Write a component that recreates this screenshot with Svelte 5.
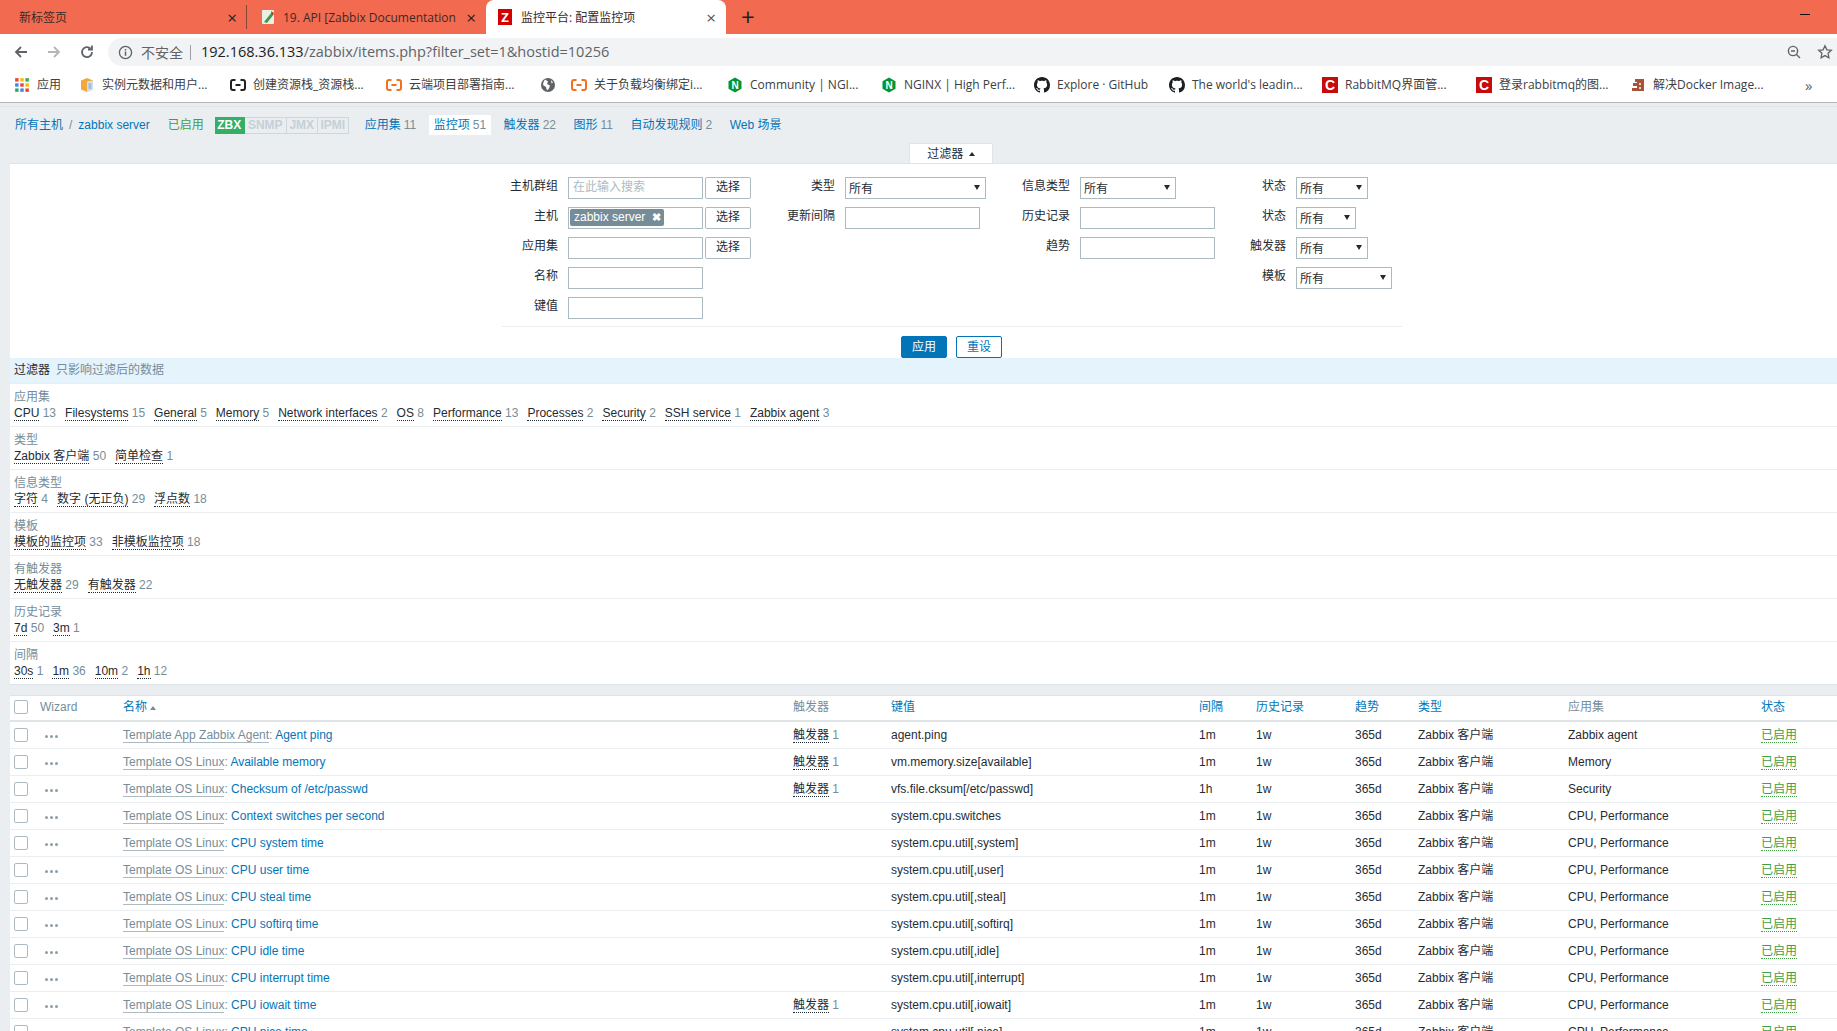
<script>
	const bookmarks = [
		{ icon: 'apps', text: '应用', w: 65 },
		{ icon: 'box', text: '实例元数据和用户...', w: 151 },
		{ icon: 'cloudk', text: '创建资源栈_资源栈...', w: 156 },
		{ icon: 'cloud', text: '云端项目部署指南...', w: 154 },
		{ icon: 'globe', text: '', w: 31 },
		{ icon: 'cloud', text: '关于负载均衡绑定i...', w: 156 },
		{ icon: 'nginx', text: 'Community | NGI...', w: 154 },
		{ icon: 'nginx', text: 'NGINX | High Perf...', w: 153 },
		{ icon: 'gh', text: 'Explore · GitHub', w: 135 },
		{ icon: 'gh', text: "The world's leadin...", w: 153 },
		{ icon: 'csdn', text: 'RabbitMQ界面管...', w: 154 },
		{ icon: 'csdn', text: '登录rabbitmq的图...', w: 154 },
		{ icon: 'brick', text: '解决Docker Image...', w: 172 }
	];

	const navLinks = [
		['应用集', 11, false],
		['监控项', 51, true],
		['触发器', 22, false],
		['图形', 11, false],
		['自动发现规则', 2, false],
		['Web 场景', '', false]
	];

	const subfilters = [
		{ title: '应用集', items: [['CPU', 13], ['Filesystems', 15], ['General', 5], ['Memory', 5], ['Network interfaces', 2], ['OS', 8], ['Performance', 13], ['Processes', 2], ['Security', 2], ['SSH service', 1], ['Zabbix agent', 3]] },
		{ title: '类型', items: [['Zabbix 客户端', 50], ['简单检查', 1]] },
		{ title: '信息类型', items: [['字符', 4], ['数字 (无正负)', 29], ['浮点数', 18]] },
		{ title: '模板', items: [['模板的监控项', 33], ['非模板监控项', 18]] },
		{ title: '有触发器', items: [['无触发器', 29], ['有触发器', 22]] },
		{ title: '历史记录', items: [['7d', 50], ['3m', 1]] },
		{ title: '间隔', items: [['30s', 1], ['1m', 36], ['10m', 2], ['1h', 12]] }
	];

	const cpuPerf = 'CPU, Performance';
	const rows = [
		['Template App Zabbix Agent', 'Agent ping', true, 'agent.ping', '1m', 'Zabbix agent'],
		['Template OS Linux', 'Available memory', true, 'vm.memory.size[available]', '1m', 'Memory'],
		['Template OS Linux', 'Checksum of /etc/passwd', true, 'vfs.file.cksum[/etc/passwd]', '1h', 'Security'],
		['Template OS Linux', 'Context switches per second', false, 'system.cpu.switches', '1m', cpuPerf],
		['Template OS Linux', 'CPU system time', false, 'system.cpu.util[,system]', '1m', cpuPerf],
		['Template OS Linux', 'CPU user time', false, 'system.cpu.util[,user]', '1m', cpuPerf],
		['Template OS Linux', 'CPU steal time', false, 'system.cpu.util[,steal]', '1m', cpuPerf],
		['Template OS Linux', 'CPU softirq time', false, 'system.cpu.util[,softirq]', '1m', cpuPerf],
		['Template OS Linux', 'CPU idle time', false, 'system.cpu.util[,idle]', '1m', cpuPerf],
		['Template OS Linux', 'CPU interrupt time', false, 'system.cpu.util[,interrupt]', '1m', cpuPerf],
		['Template OS Linux', 'CPU iowait time', true, 'system.cpu.util[,iowait]', '1m', cpuPerf],
		['Template OS Linux', 'CPU nice time', false, 'system.cpu.util[,nice]', '1m', cpuPerf]
	];

	const ghPath = 'M8 0C3.58 0 0 3.58 0 8c0 3.54 2.29 6.53 5.47 7.59.4.07.55-.17.55-.38 0-.19-.01-.82-.01-1.49-2.01.37-2.53-.49-2.69-.94-.09-.23-.48-.94-.82-1.13-.28-.15-.68-.52-.01-.53.63-.01 1.08.58 1.23.82.72 1.21 1.87.87 2.33.66.07-.52.28-.87.51-1.07-1.78-.2-3.64-.89-3.64-3.95 0-.87.31-1.59.82-2.15-.08-.2-.36-1.02.08-2.12 0 0 .67-.21 2.2.82.64-.18 1.32-.27 2-.27.68 0 1.36.09 2 .27 1.53-1.04 2.2-.82 2.2-.82.44 1.1.16 1.92.08 2.12.51.56.82 1.27.82 2.15 0 3.07-1.87 3.75-3.65 3.95.29.25.54.73.54 1.48 0 1.07-.01 1.93-.01 2.2 0 .21.15.46.55.38A8.013 8.013 0 0016 8c0-4.42-3.58-8-8-8z';
	const appColors = ['#ea4335', '#fbbc05', '#34a853', '#4285f4', '#ea4335', '#fbbc05', '#34a853', '#4285f4', '#ea4335'];
</script>

<div class="chrome">
	<div class="tabstrip">
		<div class="tab first"><span class="tab-title">新标签页</span><span class="close">×</span></div>
		<div class="tab second">
			<svg class="fav" viewBox="0 0 16 16">
				<rect x="2" y="1" width="12" height="14" rx="1" fill="#e8efe6" />
				<path d="M4 13 L12 3 L14 5 L7 14 Z" fill="#3c9a4a" />
				<path d="M11 2 L14 4 L12 6 Z" fill="#c0392b" />
			</svg>
			<span class="tab-title">19. API [Zabbix Documentation</span><span class="close">×</span>
		</div>
		<div class="tab active">
			<span class="z-fav">Z</span>
			<span class="tab-title">监控平台: 配置监控项</span><span class="close grey">×</span>
		</div>
		<span class="newtab">+</span>
		<span class="minimize"></span>
	</div>

	<div class="toolbar">
		<svg class="nav-ic" viewBox="0 0 16 16"><path d="M14 8H3M8 3 3 8l5 5" fill="none" stroke="#5f6368" stroke-width="1.8" /></svg>
		<svg class="nav-ic" viewBox="0 0 16 16"><path d="M2 8h11M8 3l5 5-5 5" fill="none" stroke="#b4b7ba" stroke-width="1.8" /></svg>
		<svg class="nav-ic" viewBox="0 0 16 16"><path d="M13 8a5 5 0 1 1-1.5-3.5M13 1.5v4H9" fill="none" stroke="#5f6368" stroke-width="1.8" /></svg>
		<div class="omnibox">
			<svg class="info" viewBox="0 0 16 16"><circle cx="8" cy="8" r="6.5" fill="none" stroke="#5f6368" stroke-width="1.4" /><path d="M8 7v4.5M8 4.2v1.6" stroke="#5f6368" stroke-width="1.6" /></svg>
			<span class="insecure">不安全</span>
			<span class="url"><b>192.168.36.133</b>/zabbix/items.php?filter_set=1&amp;hostid=10256</span>
			<svg class="omni-ic" viewBox="0 0 16 16"><circle cx="7" cy="7" r="4.6" fill="none" stroke="#5f6368" stroke-width="1.4" /><path d="M10.5 10.5 14 14M5 7h4" stroke="#5f6368" stroke-width="1.4" /></svg>
			<svg class="omni-ic star" viewBox="0 0 16 16"><path d="M8 1.8l1.9 4 4.4.5-3.2 3 .8 4.4L8 11.6l-3.9 2.1.8-4.4-3.2-3 4.4-.5z" fill="none" stroke="#5f6368" stroke-width="1.3" /></svg>
		</div>
	</div>

	<div class="bookmarks">
		{#each bookmarks as b}
			<div class="bm" style:width="{b.w}px">
				{#if b.icon === 'apps'}
					<svg class="bm-ic" viewBox="0 0 14 14">
						{#each appColors as c, i}
							<rect x={1 + (i % 3) * 4.5} y={1 + Math.floor(i / 3) * 4.5} width="3" height="3" fill={c} />
						{/each}
					</svg>
				{:else if b.icon === 'box'}
					<svg class="bm-ic" viewBox="0 0 16 16">
						<path d="M2 3.5 8 1l6 2.5v9L8 15l-6-2.500z" fill="#f2a93b" />
						<path d="M8 4.500 14 3.500v9L8 15z" fill="#cfe2f3" />
						<path d="M9.500 7h3M9.500 9h3M9.500 11h3" stroke="#5b8db8" stroke-width=".8" />
					</svg>
				{:else if b.icon === 'cloudk' || b.icon === 'cloud'}
					<svg class="bm-ic" viewBox="0 0 16 16">
						<path d="M5.500 3H3a2 2 0 0 0-2 2v6a2 2 0 0 0 2 2h2.500M10.500 3H13a2 2 0 0 1 2 2v6a2 2 0 0 1-2 2h-2.500M5.500 8h5" fill="none" stroke={b.icon === 'cloud' ? '#f37021' : '#222'} stroke-width="2" />
					</svg>
				{:else if b.icon === 'globe'}
					<svg class="bm-ic" viewBox="0 0 16 16">
						<circle cx="8" cy="8" r="7" fill="#5f6368" />
						<path d="M5 2.500l3 2-1 2.500 3 1.500-1 3-2 2-1-3.500-3-2 .5-3zM11 3l2 2.500-1.500 1z" fill="#fff" />
					</svg>
				{:else if b.icon === 'nginx'}
					<svg class="bm-ic" viewBox="0 0 16 16">
						<path d="M8 .5 14.500 4.200v7.600L8 15.500 1.500 11.800V4.200z" fill="#009639" />
						<text x="8" y="11.500" text-anchor="middle" font-size="10" font-weight="700" fill="#fff" font-family="Liberation Sans">N</text>
					</svg>
				{:else if b.icon === 'gh'}
					<svg class="bm-ic" viewBox="0 0 16 16"><path d={ghPath} fill="#1b1f23" /></svg>
				{:else if b.icon === 'csdn'}
					<svg class="bm-ic" viewBox="0 0 16 16">
						<rect width="16" height="16" fill="#c70a0a" />
						<text x="8" y="13" text-anchor="middle" font-size="14" font-weight="700" fill="#fff" font-family="Liberation Sans">C</text>
					</svg>
				{:else if b.icon === 'brick'}
					<svg class="bm-ic" viewBox="0 0 16 16">
						<path d="M5 2h9v12H2v-3h5V9H3V6h4V5H5z" fill="#a5533a" />
						<path d="M9 6h2v2H9zM9 10h2v2H9z" fill="#e8d3c5" />
					</svg>
				{/if}
				{#if b.text}<span>{b.text}</span>{/if}
			</div>
		{/each}
		<span class="more">»</span>
	</div>
</div>

<div class="page">
	<nav class="hostnav">
		<a class="link" href="#a">所有主机</a><span class="slash">/</span><a class="link" href="#a">zabbix server</a>
		<span class="enabled">已启用</span>
		<span class="avail"><span class="on">ZBX</span><span class="snmp">SNMP</span><span>JMX</span><span>IPMI</span></span>
		<div class="navlinks">
			{#each navLinks as [name, count, selected]}
				<span class="navlink" class:selected><a class="link" href="#a">{name}</a>{#if count}<em class="count">{count}</em>{/if}</span>
			{/each}
		</div>
	</nav>

	<div class="filter-tab-row"><div class="filter-tab">过滤器 <i class="up"></i></div></div>

	<section class="filter">
		<div class="form">
			<div class="col c1">
				<label>主机群组</label>
				<div class="with-btn"><div class="field placeholder">在此输入搜索</div><button>选择</button></div>
				<label>主机</label>
				<div class="with-btn"><div class="field"><span class="tag">zabbix server <b>✖</b></span></div><button>选择</button></div>
				<label>应用集</label>
				<div class="with-btn"><div class="field"></div><button>选择</button></div>
				<label>名称</label>
				<div class="field"></div>
				<label>键值</label>
				<div class="field"></div>
			</div>
			<div class="col c2">
				<label>类型</label>
				<div class="select w141">所有<i></i></div>
				<label>更新间隔</label>
				<div class="field"></div>
			</div>
			<div class="col c3">
				<label>信息类型</label>
				<div class="select w96">所有<i></i></div>
				<label>历史记录</label>
				<div class="field"></div>
				<label>趋势</label>
				<div class="field"></div>
			</div>
			<div class="col c4">
				<label>状态</label>
				<div class="select w72">所有<i></i></div>
				<label>状态</label>
				<div class="select w60">所有<i></i></div>
				<label>触发器</label>
				<div class="select w72">所有<i></i></div>
				<label>模板</label>
				<div class="select w96">所有<i></i></div>
			</div>
		</div>
		<div class="divider"></div>
		<div class="actions">
			<button class="primary">应用</button>
			<button class="outline">重设</button>
		</div>
	</section>

	<div class="notice">过滤器<span>只影响过滤后的数据</span></div>

	<section class="subfilters">
		{#each subfilters as group}
			<div class="subgroup">
				<div class="subtitle">{group.title}</div>
				<div class="subitems">
					{#each group.items as [name, count]}
						<span class="subitem"><a href="#a">{name}</a> <em>{count}</em></span>
					{/each}
				</div>
			</div>
		{/each}
	</section>

	<section class="items">
		<div class="row head">
			<span class="check"></span>
			<span class="muted">Wizard</span>
			<span class="blue">名称 <i class="sort"></i></span>
			<span class="muted">触发器</span>
			<span class="blue">键值</span>
			<span class="blue">间隔</span>
			<span class="blue">历史记录</span>
			<span class="blue">趋势</span>
			<span class="blue">类型</span>
			<span class="muted">应用集</span>
			<span class="blue">状态</span>
		</div>
		{#each rows as [tpl, name, trigger, key, interval, apps]}
			<div class="row">
				<span class="check"></span>
				<span class="dots"><i></i><i></i><i></i></span>
				<span><a class="tpl" href="#a">{tpl}</a><span class="muted">:</span> <a class="blue" href="#a">{name}</a></span>
				<span>{#if trigger}<a class="dotted" href="#a">触发器</a> <em>1</em>{/if}</span>
				<span>{key}</span>
				<span>{interval}</span>
				<span>1w</span>
				<span>365d</span>
				<span>Zabbix 客户端</span>
				<span>{apps}</span>
				<span><a class="status" href="#a">已启用</a></span>
			</div>
		{/each}
	</section>
</div>

<style>
	:global(html), :global(body) {
		margin: 0;
		height: 100%;
		overflow: hidden;
	}

	:global(body) {
		font-family: "Liberation Sans", "Noto Sans CJK SC", sans-serif;
		font-size: 12px;
		line-height: 14px;
		color: #1f2c33;
		background: #ebeef0;
	}

	a {
		text-decoration: none;
	}

	em {
		font-style: normal;
		color: #768d99;
	}

	/* browser chrome */
	.chrome {
		font-family: "Open Sans", "Noto Sans CJK SC", sans-serif;
	}

	.tabstrip {
		height: 34px;
		background: #f26a50;
		display: flex;
		position: relative;
		font-size: 12px;
		color: #3a2a26;
	}

	.tab {
		display: flex;
		align-items: center;
		height: 34px;
		box-sizing: border-box;
	}

	.tab.first {
		width: 247px;
		padding: 0 9px 0 19px;
		border-right: 1px solid #8c4636;
		height: 24px;
		margin-top: 5px;
	}

	.tab.second {
		width: 239px;
		padding: 0 10px 0 13px;
	}

	.tab.active {
		width: 240px;
		padding: 0 10px 0 12px;
		background: #fff;
		border-radius: 8px 8px 0 0;
	}

	.tab-title {
		flex: 1;
		white-space: nowrap;
		overflow: hidden;
		line-height: 20px;
		padding-top: 1px;
	}

	.close {
		font-size: 17px;
		line-height: 1;
		color: #222;
		margin-left: 4px;
	}

	.close.grey {
		color: #555;
	}

	.fav {
		width: 16px;
		height: 16px;
		margin-right: 7px;
		flex: none;
	}

	.z-fav {
		width: 14px;
		height: 16px;
		background: #d40000;
		color: #fff;
		font-weight: 700;
		font-size: 13px;
		text-align: center;
		line-height: 16px;
		margin-right: 9px;
		flex: none;
	}

	.newtab {
		font-size: 24px;
		line-height: 34px;
		color: #222;
		margin-left: 15px;
	}

	.minimize {
		position: absolute;
		right: 27px;
		top: 14px;
		width: 10px;
		height: 1px;
		background: #111;
	}

	.toolbar {
		height: 34px;
		background: #fff;
		display: flex;
		align-items: center;
		padding: 4px 0 2px 13px;
		box-sizing: border-box;
	}

	.nav-ic {
		width: 16px;
		height: 16px;
		margin-right: 17px;
		flex: none;
	}

	.omnibox {
		flex: 1;
		height: 28px;
		margin-left: -4px;
		background: #f1f3f4;
		border-radius: 14px 0 0 14px;
		display: flex;
		align-items: center;
		padding-left: 10px;
		color: #5f6368;
	}

	.info {
		width: 15px;
		height: 15px;
		margin-right: 8px;
	}

	.insecure {
		padding-right: 7px;
		border-right: 1px solid #9aa0a6;
		line-height: 15px;
		margin-right: 10px;
		font-size: 14px;
	}

	.url {
		flex: 1;
		font-size: 14.5px;
		color: #5f6368;
	}

	.url b {
		font-weight: 400;
		color: #202124;
	}

	.omni-ic {
		width: 16px;
		height: 16px;
		margin-right: 15px;
	}

	.omni-ic.star {
		margin-right: 4px;
	}

	.bookmarks {
		height: 34px;
		background: #fff;
		border-bottom: 1px solid #b5b5b5;
		display: flex;
		align-items: center;
		padding-left: 14px;
		font-size: 12px;
		color: #3c4043;
		position: relative;
	}

	.bm {
		display: flex;
		align-items: center;
		flex: none;
		white-space: nowrap;
	}

	.bm-ic {
		width: 16px;
		height: 16px;
		margin-right: 7px;
		flex: none;
	}

	.more {
		position: absolute;
		left: 1805px;
		font-size: 15px;
		color: #5f6368;
	}

	/* zabbix page */
	.page {
		border-top: 1px solid #dfe4e7;
		margin-top: 3px;
	}

	.link,
	.blue {
		color: #0275b8;
	}

	.muted {
		color: #768d99;
	}

	.hostnav {
		display: flex;
		align-items: center;
		height: 36px;
		padding: 0 0 0 15px;
	}

	.slash {
		margin: 0 6px;
		color: #768d99;
	}

	.enabled {
		color: #429e47;
		margin-left: 18px;
	}

	.avail {
		display: flex;
		margin-left: 11px;
		height: 17px;
		line-height: 15px;
		font-weight: 700;
		color: #c5d0d6;
	}

	.avail span {
		width: 31px;
		text-align: center;
		border: 1px solid #ced7dc;
		border-left: 0;
		box-sizing: border-box;
	}

	.avail .snmp {
		width: 42px;
	}

	.avail .on {
		width: 30px;
		background: #34af67;
		border-color: #34af67;
		color: #fff;
	}

	.navlinks {
		display: flex;
		margin-left: 11px;
		align-items: center;
	}

	.navlink {
		padding: 3px 5px;
		margin-right: 7.5px;
		white-space: nowrap;
	}

	.navlink.selected {
		background: #fff;
	}

	.count {
		margin-left: 3px;
	}

	.filter-tab-row {
		padding-left: 909px;
		height: 20px;
	}

	.filter-tab {
		width: 84px;
		height: 20px;
		background: #fff;
		text-align: center;
		line-height: 20px;
		box-sizing: border-box;
		border: 1px solid #dfe4e7;
		border-bottom: 0;
	}

	.up {
		display: inline-block;
		border: 3.500px solid transparent;
		border-top: 0;
		border-bottom: 4px solid #1f2c33;
		vertical-align: 2px;
		margin-left: 2px;
	}

	.filter {
		margin-left: 10px;
		background: #fff;
		height: 195px;
		box-sizing: border-box;
		padding-top: 13px;
		border-top: 1px solid #dfe4e7;
	}

	.form {
		display: flex;
		height: 142px;
	}

	.col {
		display: grid;
		grid-auto-rows: 22px;
		row-gap: 8px;
		column-gap: 10px;
		align-content: start;
		flex: none;
	}

	.c1 {
		grid-template-columns: 78px auto;
		margin-left: 470px;
		width: 307px;
	}

	.c2 {
		grid-template-columns: 48px auto;
		width: 233px;
	}

	.c3 {
		grid-template-columns: 50px auto;
		width: 216px;
	}

	.c4 {
		grid-template-columns: 50px auto;
	}

	.col label {
		text-align: right;
		line-height: 18px;
		white-space: nowrap;
	}

	.with-btn {
		display: flex;
		gap: 2px;
	}

	.field {
		width: 135px;
		height: 22px;
		box-sizing: border-box;
		border: 1px solid #acbbc2;
		background: #fff;
		padding: 1px;
	}

	.placeholder {
		color: #acbbc2;
		padding: 2px 0 0 4px;
		line-height: 15px;
	}

	.tag {
		display: inline-block;
		background: #768d99;
		color: #fff;
		height: 17px;
		line-height: 16px;
		width: 94px;
		padding: 0 4px;
		box-sizing: border-box;
		border-radius: 2px;
		white-space: nowrap;
	}

	.tag b {
		font-size: 11px;
		margin-left: 3px;
	}

	button {
		font: inherit;
		width: 46px;
		height: 22px;
		padding: 0 0 2px;
		background: #fff;
		color: #1f2c33;
		border: 1px solid #acbbc2;
		border-radius: 2px;
	}

	.select {
		position: relative;
		height: 22px;
		box-sizing: border-box;
		border: 1px solid #acbbc2;
		padding-left: 3px;
		line-height: 22px;
	}

	.select i {
		position: absolute;
		right: 5px;
		top: 7px;
		border: 3.500px solid transparent;
		border-top: 5px solid #1f2c33;
		border-bottom: 0;
	}

	.w141 { width: 141px; }
	.w96 { width: 96px; }
	.w72 { width: 72px; }
	.w60 { width: 60px; }

	.divider {
		height: 1px;
		background: #ebeef0;
		margin-left: 492px;
		width: 900px;
		margin-top: 7px;
	}

	.actions {
		display: flex;
		margin: 9px 0 0 891px;
		gap: 9px;
	}

	.actions button {
		padding: 0;
	}

	.actions .primary {
		background: #0275b8;
		color: #fff;
		border-color: #0275b8;
	}

	.actions .outline {
		color: #0275b8;
		border-color: #0275b8;
	}

	.notice {
		margin-left: 10px;
		height: 25px;
		line-height: 25px;
		background: #e5f3fd;
		padding-left: 4px;
	}

	.notice span {
		color: #768d99;
		margin-left: 6px;
	}

	.subfilters {
		margin-left: 10px;
		background: #fff;
		border-bottom: 1px solid #dfe4e7;
		margin-bottom: 10px;
	}

	.subgroup {
		height: 43px;
		box-sizing: border-box;
		padding: 6px 0 0 4px;
		border-top: 1px solid #ebeef0;
	}

	.subtitle {
		color: #768d99;
		line-height: 15px;
	}

	.subitems {
		display: flex;
		gap: 9px;
		line-height: 16px;
	}

	.subitem a,
	.dotted {
		color: #1f2c33;
		border-bottom: 1px dotted #1f2c33;
	}

	.items {
		margin-left: 10px;
		background: #fff;
		border-top: 1px solid #dfe4e7;
	}

	.row {
		display: grid;
		grid-template-columns: 26px 83px 670px 98px 308px 57px 99px 63px 150px 193px auto;
		align-items: center;
		height: 27px;
		padding-left: 4px;
		box-sizing: border-box;
		border-bottom: 1px solid #ebeef0;
		white-space: nowrap;
	}

	.row.head {
		height: 26px;
		padding-bottom: 2px;
		border-bottom: 2px solid #dfe4e7;
	}

	.check {
		width: 14px;
		height: 14px;
		box-sizing: border-box;
		border: 1px solid #acbbc2;
		border-radius: 2px;
		background: #fff;
	}

	.dots {
		display: flex;
		gap: 2px;
		padding-left: 5px;
		padding-top: 2px;
	}

	.dots i {
		width: 3px;
		height: 3px;
		border-radius: 50%;
		background: #8a9ea9;
	}

	.sort {
		display: inline-block;
		border: 3px solid transparent;
		border-top: 0;
		border-bottom: 4px solid #768d99;
		vertical-align: 1px;
	}

	.tpl {
		color: #768d99;
		border-bottom: 1px solid #acbbc2;
	}

	.status {
		color: #429e47;
		border-bottom: 1px dotted #429e47;
	}
</style>
